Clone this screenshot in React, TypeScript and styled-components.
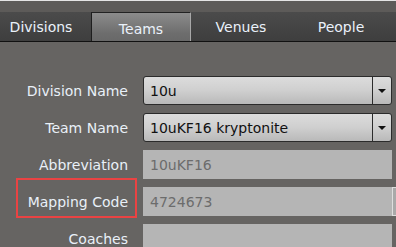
import React from "react";
import styled, { createGlobalStyle } from "styled-components";

const Global = createGlobalStyle`
  html, body { margin: 0; padding: 0; }
  body {
    width: 396px;
    height: 247px;
    overflow: hidden;
    background: #666462;
    font-family: "DejaVu Sans", Verdana, sans-serif;
  }
`;

const Page = styled.div`
  width: 396px;
  height: 247px;
  overflow: hidden;
  background: #666462;
  border-top: 1px solid #e4e4e4;
  box-sizing: border-box;
`;

const TopStrip = styled.div`
  height: 11px;
  background: #5d5b59;
`;

const TabBar = styled.div`
  display: flex;
  height: 29px;
  background: linear-gradient(#4b4b4b, #3e3e3e);
  border-bottom: 1px solid #111;
  overflow: hidden;
`;

const Tab = styled.div<{ $active?: boolean; $first?: boolean }>`
  flex: 0 0 100px;
  box-sizing: border-box;
  margin-left: ${(p) => (p.$first ? "-9px" : "0")};
  display: flex;
  align-items: center;
  justify-content: center;
  font-size: 14px;
  color: #eaf1fa;
  padding-top: ${(p) => (p.$active ? "3px" : "1px")};
  height: ${(p) => (p.$active ? "30px" : "29px")};
  background: ${(p) =>
    p.$active ? "linear-gradient(#8c8c8c, #6d6d6d 70%, #686868)" : "transparent"};
  border-top: ${(p) => (p.$active ? "1px solid #222" : "none")};
  border-left: ${(p) => (p.$active ? "1px solid #1e1e1e" : "none")};
  border-right: ${(p) => (p.$active ? "1px solid #a8a8a8" : "none")};
`;

const Form = styled.div`
  display: grid;
  grid-template-columns: 128px 249px 19px;
  grid-auto-rows: 29px;
  column-gap: 15px;
  row-gap: 8px;
  padding-top: 34px;
`;

const Label = styled.div`
  position: relative;
  display: flex;
  align-items: center;
  justify-content: flex-end;
  font-size: 14px;
  color: #e9f0f8;
  white-space: nowrap;
`;

const Highlight = styled.div`
  position: absolute;
  left: 16px;
  right: -9px;
  top: -9px;
  bottom: -2px;
  border: 2px solid #ea4343;
`;

const Select = styled.div`
  display: flex;
  box-sizing: border-box;
  border: 1px solid #2b2b2b;
  border-radius: 3px;
  background: linear-gradient(#dcdcdc, #cfcfcf 50%, #b9b9b9);
  overflow: hidden;
`;

const SelectValue = styled.div`
  flex: 1;
  display: flex;
  align-items: center;
  padding-left: 6px;
  font-size: 14px;
  color: #111;
`;

const SelectButton = styled.div`
  flex: 0 0 18px;
  border-left: 1px solid #2b2b2b;
  display: flex;
  align-items: center;
  justify-content: center;
`;

const Arrow = styled.div`
  width: 0;
  height: 0;
  border-left: 4px solid transparent;
  border-right: 4px solid transparent;
  border-top: 4px solid #111;
`;

const Input = styled.div`
  display: flex;
  align-items: center;
  box-sizing: border-box;
  padding-left: 7px;
  background: #b5b5b5;
  font-size: 14px;
  color: #6c6c6c;
`;

const Side = styled.div<{ $button?: boolean }>`
  box-sizing: border-box;
  margin-left: -15px;
  border: ${(p) => (p.$button ? "1px solid #dedede" : "none")};
  border-right: none;
  background: ${(p) => (p.$button ? "#a9a9a9" : "transparent")};
`;

export default function App() {
  return (
    <>
      <Global />
      <Page>
        <TopStrip />
        <TabBar>
          <Tab $first>Divisions</Tab>
          <Tab $active>Teams</Tab>
          <Tab>Venues</Tab>
          <Tab>People</Tab>
        </TabBar>
        <Form>
          <Label>Division Name</Label>
          <Select>
            <SelectValue>10u</SelectValue>
            <SelectButton>
              <Arrow />
            </SelectButton>
          </Select>
          <Side />

          <Label>Team Name</Label>
          <Select>
            <SelectValue>10uKF16 kryptonite</SelectValue>
            <SelectButton>
              <Arrow />
            </SelectButton>
          </Select>
          <Side />

          <Label>Abbreviation</Label>
          <Input>10uKF16</Input>
          <Side />

          <Label>
            Mapping Code
            <Highlight />
          </Label>
          <Input>4724673</Input>
          <Side $button />

          <Label>Coaches</Label>
          <Input />
          <Side />
        </Form>
      </Page>
    </>
  );
}
